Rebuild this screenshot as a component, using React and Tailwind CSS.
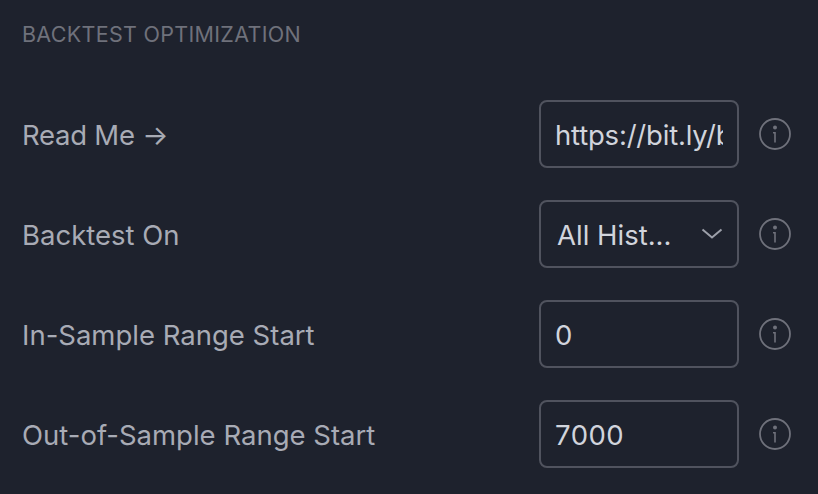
const ROWS = [
	{ label: "Read Me →", labelClass: "tracking-[-0.25px]", kind: "input", value: "https://bit.ly/backtest", valueClass: "tracking-[-0.2px]" },
	{ label: "Backtest On", labelClass: "", kind: "select", value: "All Hist...", valueClass: "" },
	{ label: "In-Sample Range Start", labelClass: "", kind: "input", value: "0", valueClass: "" },
	{ label: "Out-of-Sample Range Start", labelClass: "", kind: "input", value: "7000", valueClass: "tracking-[0.5px]" },
];

function InfoIcon() {
	return (
		<svg width="32" height="32" viewBox="0 0 32 32" fill="none" className="shrink-0 text-[#6f717b]">
			<circle cx="16" cy="16" r="15" stroke="currentColor" strokeWidth="1.8" />
			<circle cx="16" cy="9.5" r="2" fill="currentColor" />
			<path d="M14 14.8H16V24.5" stroke="currentColor" strokeWidth="1.6" />
		</svg>
	);
}

function Chevron() {
	return (
		<svg width="22" height="12" viewBox="0 0 22 12" fill="none" className="shrink-0 text-[#9da0aa]">
			<path d="M1.5 1.5L11 9.5L20.5 1.5" stroke="currentColor" strokeWidth="2" />
		</svg>
	);
}

export default function App() {
	return (
		<div className="h-[494px] w-[818px] overflow-hidden bg-[#1e222d] pl-[22px] pr-[27px] font-['Inter',sans-serif]">
			<h2 className="pt-[20px] text-[21.5px] font-normal leading-[28px] tracking-[0.3px] text-[#6f717b]">
				BACKTEST OPTIMIZATION
			</h2>
			<div className="mt-[52px] flex flex-col gap-[32px]">
				{ROWS.map((row) => (
					<div key={row.label} className="flex h-[68px] items-center">
						<span className={`flex-1 pt-[2px] text-[27.5px] leading-[36px] text-[#a8abb5] ${row.labelClass}`}>
							{row.label}
						</span>
						{row.kind === "input" ? (
							<div className="flex h-[68px] w-[200px] items-center rounded-[8px] border-2 border-[#50535e] pl-[14px] pr-[14px]">
								<span className={`overflow-hidden whitespace-nowrap pt-[2px] text-[27.5px] leading-[36px] text-[#d1d4dc] ${row.valueClass}`}>
									{row.value}
								</span>
							</div>
						) : (
							<div className="flex h-[68px] w-[200px] items-center justify-between rounded-[8px] border-2 border-[#50535e] pl-[16px] pr-[14px]">
								<span className={`whitespace-nowrap pt-[2px] text-[27.5px] leading-[36px] text-[#d1d4dc] ${row.valueClass}`}>
									{row.value}
								</span>
								<Chevron />
							</div>
						)}
						<div className="ml-[20px]">
							<InfoIcon />
						</div>
					</div>
				))}
			</div>
		</div>
	);
}
